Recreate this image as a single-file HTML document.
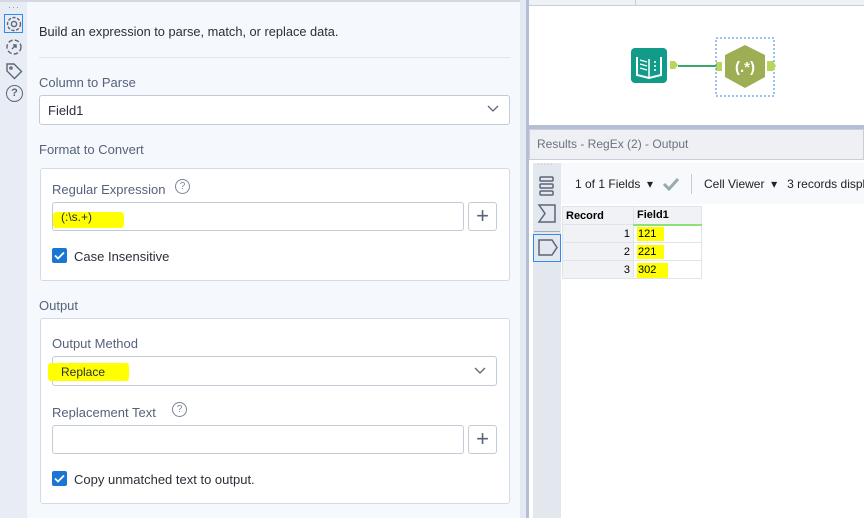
<!DOCTYPE html>
<html><head><style>
*{box-sizing:border-box;margin:0;padding:0}
body{width:864px;height:518px;overflow:hidden;position:relative;font-family:"Liberation Sans",sans-serif;background:#fff}
.a{position:absolute}
.lbl{position:absolute;font-size:13px;color:#56627a}
.inp{position:absolute;background:#fff;border:1px solid #c3cad8;border-radius:3px}
.plus{position:absolute;width:29px;height:29px;border:1px solid #c3cad8;border-radius:3px;background:#fff;color:#5a6478;font-size:22px;line-height:25px;text-align:center}
.cb{position:absolute;width:15px;height:15px;background:#1976d2;border-radius:2px}
.txt{position:absolute;font-size:13px;color:#2b2f38}
.hl{position:absolute;background:#ffff00}
.q{position:absolute;width:15px;height:15px;border:1.3px solid #7a8499;border-radius:50%;font-size:10px;color:#7a8499;text-align:center;line-height:13px}
td{border:1px solid #dfe3ea;font-size:11px;height:18px;padding:0 3px}
</style></head><body>
<div class="a" style="left:0;top:0;width:27px;height:518px;background:#e8ecf4"></div>
<div class="a" style="left:0;top:0;width:528px;height:2px;background:#d3d8e2"></div>
<div class="a" style="left:8px;top:2px;font-size:9px;color:#888;letter-spacing:1px">···</div>
<div class="a" style="left:4px;top:14px;width:19px;height:19px;border:1px solid #2f8bf0"></div>
<svg class="a" style="left:4px;top:14px" width="20" height="20" viewBox="0 0 20 20" fill="none" stroke="#5d6678" stroke-width="1.4"><circle cx="10" cy="10" r="2.6"/><circle cx="10" cy="10" r="6.5" stroke-dasharray="3.2 1.6"/></svg>
<svg class="a" style="left:4px;top:37px" width="20" height="20" viewBox="0 0 20 20" fill="none" stroke="#5d6678" stroke-width="1.4"><circle cx="10" cy="10" r="7" stroke-dasharray="4.5 2.2"/><path d="M8 12l4-4M9 8h3v3"/></svg>
<svg class="a" style="left:4px;top:61px" width="20" height="20" viewBox="0 0 20 20" fill="none" stroke="#5d6678" stroke-width="1.4"><path d="M3 3h7l7.5 7.5-7 7L3 10z"/><circle cx="7" cy="7" r="1.1"/></svg>
<div class="a" style="left:6px;top:85px;width:17px;height:17px;border:1.5px solid #5d6678;border-radius:50%;font-size:11px;font-weight:bold;color:#5d6678;text-align:center;line-height:14px">?</div>
<div class="a" style="left:27px;top:2px;width:493px;height:516px;background:#f5f8fd"></div>
<div class="txt" style="left:39px;top:24px;font-size:12.8px;color:#2b2f38">Build an expression to parse, match, or replace data.</div>
<div class="a" style="left:39px;top:57px;width:471px;height:1px;background:#e1e6ee"></div>
<div class="lbl" style="left:39px;top:75px">Column to Parse</div>
<div class="inp" style="left:39px;top:95px;width:471px;height:30px"></div>
<div class="txt" style="left:48px;top:103px">Field1</div>
<svg class="a" style="left:487px;top:105px" width="12" height="8"><path d="M1 1l5 5 5-5" stroke="#5d6678" fill="none" stroke-width="1.3"/></svg>
<div class="lbl" style="left:39px;top:142px">Format to Convert</div>
<div class="a" style="left:40px;top:168px;width:470px;height:113px;background:#fff;border:1px solid #d5dbe6;border-radius:3px"></div>
<div class="lbl" style="left:52px;top:182px">Regular Expression</div>
<div class="q" style="left:175px;top:179px">?</div>
<div class="inp" style="left:52px;top:202px;width:412px;height:29px"></div>
<div class="hl" style="left:53px;top:212px;width:71px;height:16px;border-radius:3px"></div>
<div class="txt" style="left:61px;top:210px;font-size:12px">(:\s.+)</div>
<div class="plus" style="left:468px;top:202px">+</div>
<div class="cb" style="left:52px;top:248px"></div>
<svg class="a" style="left:52px;top:248px" width="15" height="15"><path d="M3 7.5l3 3 6-6" stroke="#fff" stroke-width="1.8" fill="none"/></svg>
<div class="txt" style="left:74px;top:249px">Case Insensitive</div>
<div class="lbl" style="left:39px;top:298px">Output</div>
<div class="a" style="left:40px;top:318px;width:470px;height:186px;background:#fff;border:1px solid #d5dbe6;border-radius:3px"></div>
<div class="lbl" style="left:52px;top:336px">Output Method</div>
<div class="inp" style="left:52px;top:356px;width:445px;height:30px"></div>
<div class="hl" style="left:48px;top:363px;width:81px;height:18px;border-radius:3px"></div>
<div class="txt" style="left:61px;top:365px;font-size:12px">Replace</div>
<svg class="a" style="left:474px;top:367px" width="12" height="8"><path d="M1 1l5 5 5-5" stroke="#5d6678" fill="none" stroke-width="1.3"/></svg>
<div class="lbl" style="left:52px;top:405px">Replacement Text</div>
<div class="q" style="left:172px;top:402px">?</div>
<div class="inp" style="left:52px;top:425px;width:412px;height:29px"></div>
<div class="plus" style="left:468px;top:425px">+</div>
<div class="cb" style="left:52px;top:471px"></div>
<svg class="a" style="left:52px;top:471px" width="15" height="15"><path d="M3 7.5l3 3 6-6" stroke="#fff" stroke-width="1.8" fill="none"/></svg>
<div class="txt" style="left:74px;top:472px">Copy unmatched text to output.</div>
<div class="a" style="left:520px;top:0;width:8px;height:518px;background:#e4e8f0"></div>
<div class="a" style="left:526px;top:0;width:3px;height:518px;background:#b5bfd3"></div>
<div class="a" style="left:529px;top:0;width:335px;height:6px;background:#eef1f6;border-bottom:1px solid #c9ceda"></div>
<div class="a" style="left:635px;top:0;width:1px;height:6px;background:#c9ceda"></div>
<svg class="a" style="left:620px;top:35px" width="170" height="65">
<rect x="11" y="13" width="36" height="35" rx="4" fill="#129b88"/>
<path d="M17 22v18l12 3 12-3V22" stroke="#fff" stroke-width="2" fill="none"/><path d="M29 24v18" stroke="#fff" stroke-width="1.5"/>
<path d="M20 25l7 2M20 29l7 2M20 33l7 2" stroke="#fff" stroke-width="1.2"/><circle cx="35" cy="27" r="1" fill="#fff"/><circle cx="35" cy="31" r="1" fill="#fff"/><circle cx="35" cy="35" r="1" fill="#fff"/>
<path d="M50 26h5l3 4-3 4h-5z" fill="#b8d65c"/>
<line x1="58" y1="31" x2="96" y2="31" stroke="#3ba86a" stroke-width="2"/>
<rect x="96" y="27" width="6" height="9" fill="#b8d65c"/>
<rect x="96" y="3" width="58" height="58" fill="none" stroke="#3a86e0" stroke-dasharray="2 2"/>
<path d="M125 10l20 10v22l-20 11-20-11V20z" fill="#9eae54"/>
<text x="125" y="37" fill="#fff" font-size="15" font-weight="bold" text-anchor="middle" font-family="Liberation Sans">(.*)</text>
<path d="M147 26h6l3 5-3 5h-6z" fill="#b8d65c"/>
</svg>
<div class="a" style="left:529px;top:125px;width:335px;height:4px;background:#b5bfd3"></div>
<div class="a" style="left:529px;top:129px;width:335px;height:31px;background:#eef0f4;border:1px solid #c9ceda"></div>
<div class="a" style="left:537px;top:137px;font-size:12px;color:#6c7280">Results - RegEx (2) - Output</div>
<div class="a" style="left:529px;top:160px;width:335px;height:358px;background:#fff"></div>
<div class="a" style="left:533px;top:163px;width:28px;height:355px;background:#e3e7ee"></div>
<div class="a" style="left:537px;top:161px;font-size:7px;color:#999;letter-spacing:1px">·····</div>
<svg class="a" style="left:537px;top:176px" width="20" height="20" fill="none" stroke="#5d6678" stroke-width="1.5"><rect x="3" y="1" width="13" height="4" rx="1"/><rect x="3" y="8" width="13" height="4" rx="1"/><rect x="3" y="15" width="13" height="4" rx="1"/></svg>
<svg class="a" style="left:537px;top:203px" width="22" height="22" fill="none" stroke="#5d6678" stroke-width="1.5"><path d="M2 2h16v17H2l6-8.5z"/></svg>
<div class="a" style="left:534px;top:231px;width:26px;height:1px;background:#aab"></div>
<div class="a" style="left:533px;top:234px;width:28px;height:28px;border:1px solid #2f8bf0"></div>
<svg class="a" style="left:537px;top:238px" width="22" height="20" fill="none" stroke="#5d6678" stroke-width="1.5"><path d="M2 2h13l5 7.5-5 7.5H2z"/></svg>
<div class="a" style="left:561px;top:163px;width:303px;height:41px;background:#f7f9fc"></div>
<div class="a" style="left:575px;top:177px;font-size:12px;color:#222">1 of 1 Fields &nbsp;▾</div>
<svg class="a" style="left:662px;top:177px" width="18" height="14"><path d="M2 7l5 5 9-10" stroke="#9aa" stroke-width="3" fill="none"/></svg>
<div class="a" style="left:691px;top:174px;width:1px;height:20px;background:#ccc"></div>
<div class="a" style="left:704px;top:177px;font-size:12px;color:#222;white-space:nowrap">Cell Viewer &nbsp;▾ &nbsp; 3 records displ</div>
<table class="a" style="left:562px;top:206px;border-collapse:collapse;width:140px">
<tr style="background:#f0f2f5;font-weight:bold"><td style="width:71px;font-weight:bold">Record</td><td style="font-weight:bold;border-bottom:2px solid #8ee07a">Field1</td></tr>
<tr><td style="text-align:right;background:#f0f2f5">1</td><td><span style="background:#ff0;padding:1px 8px 1px 1px">121</span></td></tr>
<tr><td style="text-align:right;background:#f0f2f5">2</td><td><span style="background:#ff0;padding:1px 8px 1px 1px">221</span></td></tr>
<tr><td style="text-align:right;background:#f0f2f5">3</td><td><span style="background:#ff0;padding:1px 12px 2px 1px">302</span></td></tr>
</table>
</body></html>
